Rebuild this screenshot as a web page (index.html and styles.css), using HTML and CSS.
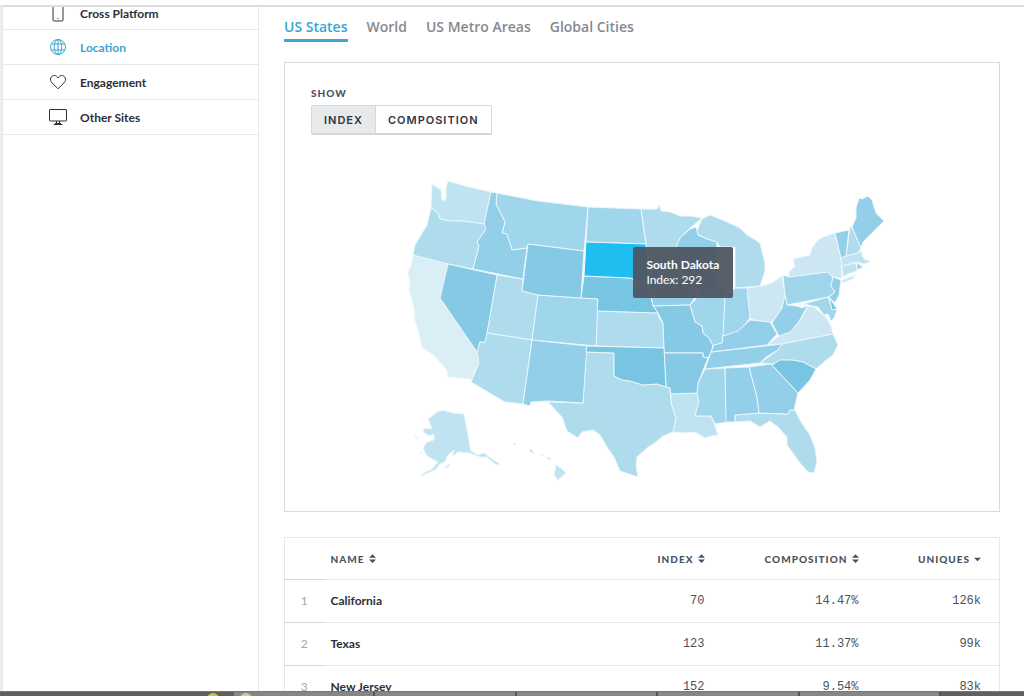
FILE: index.html
```html
<!DOCTYPE html>
<html lang="en">
<head>
<meta charset="utf-8">
<title>Audience location</title>
<link rel="stylesheet" href="styles.css">
</head>
<body>
<div class="workspace">
  <nav class="sidebar" aria-label="Report sections">
    <a class="side-link" href="#cross-platform">
      <svg class="side-icon" viewBox="0 0 20 20"><rect x="5" y="2" width="10" height="16" rx="1"/><path d="M9.500 15.500h1"/></svg>
      Cross Platform</a>
    <a class="side-link active" href="#location">
      <svg class="side-icon" viewBox="0 0 20 20"><circle cx="10" cy="10" r="7.500"/><ellipse cx="10" cy="10" rx="3.800" ry="7.500"/><path d="M10 2.500v15M3.500 7h13M3.500 13h13"/></svg>
      Location</a>
    <a class="side-link" href="#engagement">
      <svg class="side-icon" viewBox="0 0 20 20"><path d="M10 16.800L4 10.800C0.800 7.500 3.200 3.500 6.200 3.500C8 3.500 9.300 4.500 10 6C10.700 4.500 12 3.500 13.800 3.500C16.800 3.500 19.200 7.500 16 10.800Z"/></svg>
      Engagement</a>
    <a class="side-link" href="#other-sites">
      <svg class="side-icon" viewBox="0 0 20 20"><rect x="1.500" y="2.500" width="17" height="11.500" rx=".5"/><path d="M8.500 14v2.500M11.500 14v2.500M5.500 17.500h9M7 16.500h6"/></svg>
      Other Sites</a>
  </nav>
  <main class="content">
    <nav class="tabs" aria-label="Regions">
      <a class="tab active" href="#states">US States</a>
      <a class="tab" href="#world">World</a>
      <a class="tab" href="#metro">US Metro Areas</a>
      <a class="tab" href="#cities">Global Cities</a>
    </nav>
    <section class="card">
      <h2 class="show-label" id="show-label">SHOW</h2>
      <div class="toggle" role="group" aria-labelledby="show-label">
        <button class="toggle-btn selected" type="button" aria-pressed="true">INDEX</button>
        <button class="toggle-btn" type="button" aria-pressed="false">COMPOSITION</button>
      </div>
      <div class="map-wrap">
        <svg class="map" viewBox="311 135 662 350" role="img" aria-label="Index by US state">
          <g class="s1">
            <path d="M413 255L448 264L440 298L477 352L479 363L474 371L472 379L448 377L447 370L438 360L433 355L422 347L420 337L415 320L414 308L412 300L409 290L410 282L408 273L412 263Z"/>
          </g>
          <g class="s2">
            <path d="M789 277V272L795 266L793 259L802 257L810 255L812 248L817 241L823 237L835 233L841 258L842 278L833 277L828 272Z"/>
            <path d="M842 280L850 277L856 275L853 279L842 283Z"/>
            <path d="M808 306L814 307L820 312L826 317L831 326L833 334L782 344L767 345L779 336L790 332L798 323L804 314Z"/>
            <path d="M747 288L762 286L772 283L782 276L785 295L782 308L772 322L760 322L749 318Z"/>
          </g>
          <g class="s3">
            <path d="M432 184L441 190L442 200L444 201L446 198L446 188L448 181L469 187L491 192L484 224L463 221L450 221L440 219L438 213L431 208Z"/>
            <path d="M671 394L697 393L699 402L695 416H711L714 423L718 435L711 436L705 438L695 432L686 433L673 432L676 418L671 403Z"/>
            <path d="M841 258L846 256L858 253L862 251L862 256L865 260L870 260L868 263L864 264L856 262L842 266Z"/>
            <path d="M842 266L856 263L857 271L848 274L843 277Z"/>
            <path d="M443 410L453 413L464 414L471 451L478 455L484 453L492 459L500 464L496 465L487 457L480 457L470 453L458 452L452 457L454 450L448 455L445 462L440 464L435 470L428 473L421 476L422 474L432 469L438 462L432 459L426 455L423 448L427 442L434 440V434L429 436L423 432L424 428L432 429L428 419L437 412Z"/>
            <path d="M556 465L562 469L566 473L558 480L554 475ZM529 449L532 450L534 453L530 452ZM513 443L515 443L516 445L514 445ZM539 454L544 455L540 455ZM546 457L549 457L552 460L548 459Z"/>
            <path d="M445 467L449 464L450 466L446 468ZM414 435L419 439L417 439ZM420 452L422 452L422 454Z"/>
          </g>
          <g class="s4">
            <path d="M431 208L438 213L440 219L450 221L463 221L484 224L486 229L477 242L479 246L473 269L448 264L413 255L415 245L427 225Z"/>
            <path d="M497 275L523 279L522 291L538 295L532 340L487 333Z"/>
            <path d="M597 311L658 313L659 318L663 323L664 348L596 346Z"/>
            <path d="M586 352L614 353L614 376L622 380L630 381L643 385L657 384L670 388L671 403L676 418L673 432L663 436L656 442L647 448L637 457L636 465L638 477L620 471L614 457L607 447L600 435L593 430L582 432L578 438L567 431L562 417L548 402L583 403Z"/>
            <path d="M487 333L532 340L523 404L505 402L471 382L479 363L477 352L480 342L485 342Z"/>
            <path d="M641 209L657 209L659 204L661 211L670 212L680 216L690 216L702 218L690 228L680 238L676 247L680 285H648L646 244Z"/>
            <path d="M696 233L702 219L710 215L725 221L740 228L747 235L754 239L760 243L765 263L765 271L760 286L735 288V247L720 247L717 242L707 239Z"/>
            <path d="M782 344L833 334L838 345L833 355L825 361L816 369L803 362L792 360L772 364L760 363L778 350Z"/>
            <path d="M735 415L759 413L788 414L790 410L795 410L801 422L810 435L815 448L817 462L814 473L808 472L800 463L787 445L787 437L778 427L770 421L760 427L750 421L735 422Z"/>
            <path d="M850 226L853 230L861 248L858 253L846 256Z"/>
          </g>
          <g class="s5">
            <path d="M538 295L598 299L596 346L532 340Z"/>
            <path d="M588 207L641 209L643 225L646 244L586 242Z"/>
            <path d="M690 305L695 300L700 290H725L726 320L723 337L722 343L713 346L709 338L703 333L702 326L695 322Z"/>
            <path d="M725 297L735 288L747 288L750 318L738 333L723 336Z"/>
            <path d="M705 369L725 368L727 422L715 424L711 416H695L699 402L697 393L698 383Z"/>
            <path d="M797 306L828 297L832 309L837 310L834 318L831 321L828 314L824 315L818 307L808 305L802 304Z"/>
            <path d="M783 275L789 277L828 272L833 278L831 286L835 292L828 297L787 305L785 295Z"/>
            <path d="M497 193L538 201L588 207L584 251L528 244L527 248L512 250L507 234L502 233L505 222L501 214L496 204Z"/>
          </g>
          <g class="s6">
            <path d="M491 192L497 193L496 204L505 222L502 233L507 234L512 250L527 248L523 279L473 269L479 246L477 242L486 229L484 224Z"/>
            <path d="M532 340L587 346L583 403L548 401L531 402L530 406L523 404Z"/>
            <path d="M676 247L680 238L690 229L696 227L698 235L707 239L717 242L718 290H698L680 270Z"/>
            <path d="M711 352L782 344L778 350L766 357L760 363L705 369Z"/>
            <path d="M714 345L722 343L723 336L738 331L750 320L770 322L777 334L767 345L711 352Z"/>
            <path d="M785 295L787 305L797 306L802 308L808 305L798 323L790 332L779 336L772 323L782 308Z"/>
            <path d="M725 368L749 367L757 397L759 413L735 415V422H726Z"/>
            <path d="M749 367L771 364L798 393L794 410L790 410L788 414L759 413L757 397Z"/>
            <path d="M835 233L849 230L846 256L841 258Z"/>
            <path d="M852 227L856 218V208L859 198L862 199L868 196L872 200L876 213L884 221L875 230L863 242L861 248Z"/>
            <path d="M833 277L841 280L839 295L835 303L829 297L835 292L831 286Z"/>
            <path d="M857 263L863 267L857 270Z"/>
            <path d="M648 281H690L698 293L690 305L653 306Z"/>
          </g>
          <g class="s7">
            <path d="M448 264L497 275L487 333L485 342L480 342L477 352L440 298Z"/>
            <path d="M653 306L690 305L695 322L702 326L703 333L709 338L713 346L711 352L708 358L703 357V353L664 353V348L663 323L658 313Z"/>
            <path d="M664 353L703 353V357L708 358L698 383L697 393L671 394L670 388L666 387Z"/>
            <path d="M528 244L584 251L581 298L538 295L522 291Z"/>
          </g>
          <g class="s8">
            <path d="M584 276L630 278L640 281L648 283L653 306L658 313L597 311L598 299L581 298Z"/>
            <path d="M587 346L664 348L666 387L657 384L643 385L630 381L622 380L614 376V353L586 352Z"/>
            <path d="M772 365L780 360L792 360L803 362L816 369L810 380L798 393Z"/>
            <path d="M829 297L837 309L832 310Z"/>
          </g>
          <path class="hovered" d="M586 242L646 244L648 283L640 281L630 278L584 276Z"/>
        </svg>
        <div class="tooltip" role="tooltip"><strong>South Dakota</strong><span>Index: 292</span></div>
      </div>
    </section>
    <table class="states">
      <thead>
        <tr>
          <th class="rank"></th>
          <th class="name"><button type="button" class="sort">NAME <svg class="arrows" viewBox="0 0 8 10"><path d="M4 0L8 4H0ZM0 6H8L4 10Z"/></svg></button></th>
          <th class="index"><button type="button" class="sort">INDEX <svg class="arrows" viewBox="0 0 8 10"><path d="M4 0L8 4H0ZM0 6H8L4 10Z"/></svg></button></th>
          <th class="composition"><button type="button" class="sort">COMPOSITION <svg class="arrows" viewBox="0 0 8 10"><path d="M4 0L8 4H0ZM0 6H8L4 10Z"/></svg></button></th>
          <th class="uniques"><button type="button" class="sort">UNIQUES <svg class="arrows" viewBox="0 0 8 10"><path d="M0 4H8L4 8Z"/></svg></button></th>
        </tr>
      </thead>
      <tbody>
        <tr><td class="rank">1</td><td class="name">California</td><td>70</td><td>14.47%</td><td>126k</td></tr>
        <tr><td class="rank">2</td><td class="name">Texas</td><td>123</td><td>11.37%</td><td>99k</td></tr>
        <tr><td class="rank">3</td><td class="name">New Jersey</td><td>152</td><td>9.54%</td><td>83k</td></tr>
      </tbody>
    </table>
  </main>
</div>
<div class="taskbar">
  <div class="launchers"><i class="dot"></i></div>
  <div class="task"><i class="dot pale"></i></div>
  <div class="task"></div><div class="task"></div><div class="task"></div><div class="task"></div>
  <div class="tray"></div>
</div>
</body>
</html>
```

FILE: styles.css
```css
* { box-sizing: border-box; }
body {
  margin: 0;
  height: 100vh;
  overflow: hidden;
  display: flex;
  flex-direction: column;
  background: #fff;
  color: #2b303b;
  font-family: Lato, "Open Sans", sans-serif;
}
.workspace {
  flex: 1;
  min-height: 0;
  display: flex;
  margin-top: 5px;
  border-top: 2px solid #dedede;
  border-left: 2px solid #eee;
  overflow: hidden;
}
.sidebar {
  width: 257px;
  flex: none;
  overflow: hidden;
  border-left: 1px solid #e4e4e4;
  border-right: 1px solid #e6e7e8;
}
.side-link {
  display: flex;
  align-items: center;
  gap: 12px;
  height: 35px;
  padding-left: 45px;
  border-bottom: 1px solid #e6e7e8;
  color: #2b303b;
  font-size: 12px;
  font-weight: 700;
  text-decoration: none;
}
.side-link:first-child { margin-top: -10px; height: 33px; }
.side-link.active { color: #3da5d0; }
.side-icon {
  width: 20px;
  height: 20px;
  fill: none;
  stroke: currentColor;
  stroke-width: 1;
}
.content {
  flex: 1;
  min-width: 0;
  padding: 10px 24px 0 25px;
}
.tabs {
  display: flex;
  gap: 19px;
  margin-bottom: 20px;
}
.tab {
  height: 25px;
  line-height: 20px;
  border-bottom: 3px solid transparent;
  color: #85898f;
  font-family: "Open Sans", sans-serif;
  font-size: 14px;
  font-weight: 600;
  text-decoration: none;
}
.tab.active { color: #3da5d0; border-color: #3da5d0; }
.card {
  padding: 22px 26px 26px;
  border: 1px solid #d9dadc;
}
.show-label {
  margin: 0 0 4px;
  font-size: 10px;
  font-weight: 900;
  line-height: 16px;
  letter-spacing: 1px;
  color: #4b525e;
}
.toggle {
  display: inline-flex;
  height: 30px;
  border: 1px solid #d4d6d9;
  border-bottom: 2px solid #d4d6d9;
  border-radius: 2px;
  overflow: hidden;
  vertical-align: top;
}
.toggle-btn {
  padding: 0 12px;
  border: 0;
  background: #fff;
  color: #2f3541;
  font: 600 11px Inter, sans-serif;
  letter-spacing: 1px;
}
.toggle-btn.selected { background: #e7e9ec; border-right: 1px solid #d4d6d9; }
.map-wrap { position: relative; }
.map {
  display: block;
  width: 100%;
  stroke: #eaf7fc;
  stroke-width: 1;
  stroke-linejoin: round;
}
.s1 { fill: #daeef6; }
.s2 { fill: #cce7f3; }
.s3 { fill: #bfe3f1; }
.s4 { fill: #afdced; }
.s5 { fill: #a0d6ec; }
.s6 { fill: #93cfe8; }
.s7 { fill: #85c9e5; }
.s8 { fill: #78c4e3; }
.hovered { fill: #1fbdf0; }
.tooltip {
  position: absolute;
  left: 48.7%;
  top: 32%;
  display: grid;
  padding: 10px 14px 11px 13px;
  border-radius: 2px;
  background: rgba(78, 86, 98, .95);
  color: #fff;
  font-size: 12px;
  line-height: 15px;
  white-space: nowrap;
}
.states {
  width: 100%;
  margin-top: 25px;
  border-collapse: collapse;
  table-layout: fixed;
  border: 1px solid #e6e7e9;
}
.states th,
.states td {
  padding: 0 18px 0 0;
  border-bottom: 1px solid #e6e7e9;
  text-align: right;
}
.states th { height: 42px; padding-bottom: 4px; }
.states td {
  height: 43px;
  color: #4b525e;
  font: 12px/14px "Liberation Mono", monospace;
}
.states .rank { width: 39px; padding: 0; text-align: center; border-color: #d5d7d9; }
.states .name { text-align: left; padding-left: 7px; }
.states .index { width: 160px; }
.states .composition { width: 154px; }
.states .uniques { width: 141px; }
.states td:nth-child(3), .states th:nth-child(3),
.states td:nth-child(4), .states th:nth-child(4) { padding-right: 0; }
.states td.rank,
.states td.name { padding-bottom: 1px; font-family: Lato, sans-serif; }
.states td.rank { color: #a5a8ad; }
.states td.name { color: #2b303b; font-weight: 700; }
.sort {
  display: inline-flex;
  align-items: center;
  gap: 4px;
  padding: 0;
  border: 0;
  background: none;
  color: #4b525e;
  font: 900 10px/12px Lato, sans-serif;
  letter-spacing: 1px;
  vertical-align: middle;
}
.arrows { width: 7px; height: 9px; fill: currentColor; }
.taskbar {
  flex: none;
  display: flex;
  height: 5px;
  overflow: hidden;
  background: #606060;
  border-top: 1px solid #777;
}
.launchers { width: 234px; padding-left: 207px; }
.task {
  flex: 1;
  padding-left: 6px;
  background: #868686;
  border-right: 2px solid #555;
}
.tray { width: 83px; }
.dot { display: block; width: 12px; height: 12px; margin-top: 1px; border-radius: 50%; background: #d2c52e; }
.dot.pale { background: #cfcba0; }
```
